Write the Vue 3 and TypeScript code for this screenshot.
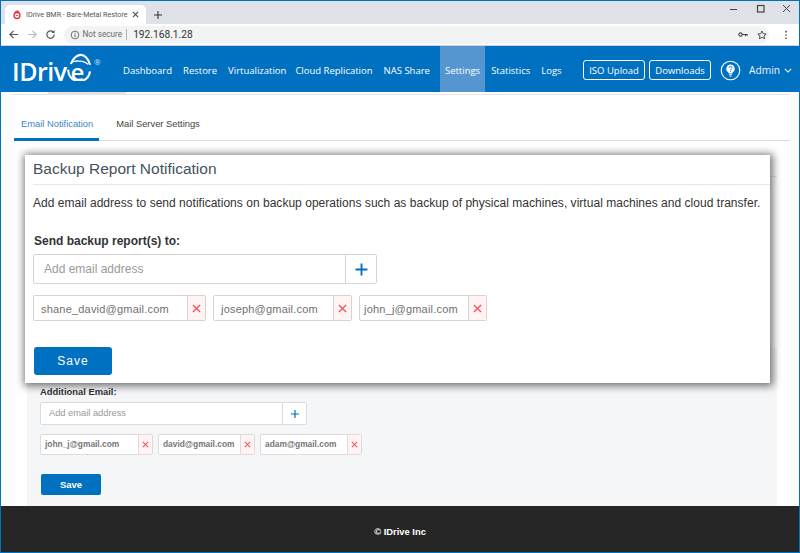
<script setup lang="ts">
type NavItem = { label: string; active?: boolean };

const navItems: NavItem[] = [
  { label: "Dashboard" },
  { label: "Restore" },
  { label: "Virtualization" },
  { label: "Cloud Replication" },
  { label: "NAS Share" },
  { label: "Settings", active: true },
  { label: "Statistics" },
  { label: "Logs" },
];

const modalEmails = ["shane_david@gmail.com", "joseph@gmail.com", "john_j@gmail.com"];
const pageEmails = ["john_j@gmail.com", "david@gmail.com", "adam@gmail.com"];
</script>

<template>
  <div class="window">
    <div class="tabstrip">
      <div class="tab">
        <svg class="favicon" viewBox="0 0 12 12" aria-hidden="true">
          <circle cx="6" cy="7.2" r="3.6" fill="none" stroke="#e8323c" stroke-width="1.6" />
          <path d="M3.6 4.4C4 1.4 8 1 8.6 3.8" fill="none" stroke="#e8323c" stroke-width="1.4" />
          <path d="M4.4 7.2h3.2" stroke="#e8323c" stroke-width="1" />
        </svg>
        <span class="tab-title">IDrive BMR - Bare-Metal Restore</span>
        <svg class="tab-close" viewBox="0 0 8 8" aria-hidden="true">
          <path d="M1 1l6 6M7 1L1 7" stroke="#444" stroke-width="1.2" />
        </svg>
      </div>
      <svg class="new-tab" viewBox="0 0 10 10" aria-hidden="true">
        <path d="M5 0v10M0 5h10" stroke="#333" stroke-width="1.3" />
      </svg>
      <div class="window-controls">
        <svg viewBox="0 0 10 10" aria-hidden="true"><path d="M0 5.5h7" stroke="#444" stroke-width="1" /></svg>
        <svg viewBox="0 0 10 10" aria-hidden="true"><rect x="1.5" y="1.5" width="6.5" height="6.5" fill="none" stroke="#444" stroke-width="1.2" /></svg>
        <svg viewBox="0 0 10 10" aria-hidden="true"><path d="M1 1l7 7M8 1L1 8" stroke="#444" stroke-width="1" /></svg>
      </div>
    </div>

    <div class="toolbar">
      <svg class="tool" viewBox="0 0 12 12" aria-hidden="true">
        <path d="M11 6H2M6 2L2 6l4 4" fill="none" stroke="#555" stroke-width="1.3" />
      </svg>
      <svg class="tool" viewBox="0 0 12 12" aria-hidden="true">
        <path d="M1 6h9M6 2l4 4-4 4" fill="none" stroke="#bbb" stroke-width="1.3" />
      </svg>
      <svg class="tool" viewBox="0 0 12 12" aria-hidden="true">
        <path d="M10 6a4 4 0 1 1-1.2-2.8" fill="none" stroke="#555" stroke-width="1.3" />
        <path d="M10.4 1v3.4H7z" fill="#555" />
      </svg>
      <div class="omnibox">
        <svg class="info" viewBox="0 0 12 12" aria-hidden="true">
          <circle cx="6" cy="6" r="4.6" fill="none" stroke="#555" stroke-width="1" />
          <path d="M6 5.4v3M6 3.4v1" stroke="#555" stroke-width="1.1" />
        </svg>
        <span class="not-secure">Not secure</span>
        <span class="url">192.168.1.28</span>
        <svg class="key" viewBox="0 0 12 8" aria-hidden="true">
          <circle cx="3" cy="4" r="2" fill="none" stroke="#444" stroke-width="1.3" />
          <path d="M5 4h6.5M9 4v2M11 4v1.6" stroke="#444" stroke-width="1.3" />
        </svg>
        <svg class="star" viewBox="0 0 12 12" aria-hidden="true">
          <path d="M6 1.2l1.5 3.2 3.5.4-2.6 2.3.7 3.4L6 8.8l-3.1 1.7.7-3.4L1 4.8l3.5-.4z" fill="none" stroke="#444" stroke-width="1.1" />
        </svg>
      </div>
      <svg class="menu" viewBox="0 0 4 12" aria-hidden="true">
        <circle cx="2" cy="2" r="1" fill="#444" />
        <circle cx="2" cy="6" r="1" fill="#444" />
        <circle cx="2" cy="10" r="1" fill="#444" />
      </svg>
    </div>

    <header class="nav">
      <div class="logo">
        <span class="logo-text">IDriv</span>
        <span class="logo-e">e</span>
        <svg class="logo-ring" viewBox="0 0 30 32" aria-hidden="true">
          <path d="M4.5 12.5C7 4.5 13 2 16 2c4 0 9 4 10.5 11.5" fill="none" stroke="#fff" stroke-width="2.4" />
          <path d="M1.5 19a12.5 12.5 0 0 0 25 2" fill="none" stroke="#fff" stroke-width="2.4" />
          <path d="M4.5 11C8 8.5 20 8 24 13" fill="none" stroke="#fff" stroke-width="1.6" />
        </svg>
        <span class="logo-reg">®</span>
      </div>
      <nav class="nav-items">
        <a v-for="item in navItems" :key="item.label" class="nav-item" :class="{ active: item.active }">{{ item.label }}</a>
      </nav>
      <div class="nav-right">
        <a class="outline-btn iso">ISO Upload</a>
        <a class="outline-btn dl">Downloads</a>
        <svg class="bulb" viewBox="0 0 22 22" aria-hidden="true">
          <circle cx="11" cy="11" r="9.7" fill="none" stroke="#fff" stroke-width="1.2" />
          <path d="M11 4.8a4.4 4.4 0 0 0-2.5 8c.5.4.6.9.6 1.4h3.8c0-.5.1-1 .6-1.4A4.4 4.4 0 0 0 11 4.8z" fill="#fff" />
          <path d="M9.5 8.2c.2-1.9 3.2-1.9 3.2 0 0 1.2-1.6 1.2-1.6 2.7M11.1 11.6v1" fill="none" stroke="#0070c0" stroke-width="0.9" />
          <path d="M9.4 15.4h3.2M10 17h2" stroke="#fff" stroke-width="1" />
        </svg>
        <span class="admin">Admin</span>
        <svg class="chev" viewBox="0 0 10 6" aria-hidden="true">
          <path d="M1 1l4 4 4-4" fill="none" stroke="#fff" stroke-width="1.3" />
        </svg>
      </div>
    </header>

    <main class="content">
      <div class="sheet">
        <div class="top-strip"><span class="top-tab"></span></div>
        <div class="tabs">
          <a class="tab-link selected">Email Notification</a>
          <a class="tab-link">Mail Server Settings</a>
        </div>
        <section class="panel">
          <label class="page-label">Additional Email:</label>
          <div class="page-input">
            <span class="page-placeholder">Add email address</span>
            <span class="page-add">
              <svg viewBox="0 0 10 10" aria-hidden="true"><path d="M5 1v8M1 5h8" stroke="#0070c0" stroke-width="1.2" /></svg>
            </span>
          </div>
          <div class="page-chips">
            <div v-for="email in pageEmails" :key="email" class="page-chip">
              <span class="page-chip-text">{{ email }}</span>
              <span class="page-chip-x">
                <svg viewBox="0 0 8 8" aria-hidden="true"><path d="M1 1l6 6M7 1L1 7" stroke="#f4555f" stroke-width="1.2" /></svg>
              </span>
            </div>
          </div>
          <button class="page-save">Save</button>
        </section>
      </div>
    </main>

    <footer class="footer">© IDrive Inc</footer>

    <div class="modal">
      <h2 class="modal-title">Backup Report Notification</h2>
      <div class="modal-body">
        <p class="modal-desc">Add email address to send notifications on backup operations such as backup of physical machines, virtual machines and cloud transfer.</p>
        <label class="modal-label">Send backup report(s) to:</label>
        <div class="modal-input">
          <span class="modal-placeholder">Add email address</span>
          <span class="modal-add">
            <svg viewBox="0 0 12 12" aria-hidden="true"><path d="M6 0.5v11M0.5 6h11" stroke="#0070c0" stroke-width="1.7" /></svg>
          </span>
        </div>
        <div class="modal-chips">
          <div v-for="email in modalEmails" :key="email" class="modal-chip">
            <span class="modal-chip-text">{{ email }}</span>
            <span class="modal-chip-x">
              <svg viewBox="0 0 10 10" aria-hidden="true"><path d="M1 1l8 8M9 1L1 9" stroke="#f4555f" stroke-width="1.5" /></svg>
            </span>
          </div>
        </div>
        <button class="modal-save">Save</button>
      </div>
    </div>
  </div>
</template>

<style>
html,
body {
  margin: 0;
  background: #fff;
}
</style>

<style scoped>
.window {
  position: relative;
  box-sizing: border-box;
  width: 800px;
  height: 553px;
  overflow: hidden;
  display: flex;
  flex-direction: column;
  border: 1px solid #0072c2;
  font-family: "Liberation Sans", Arial, sans-serif;
  background: #fff;
}

.tabstrip {
  display: flex;
  align-items: center;
  height: 23px;
  background: #dee1e6;
  flex: none;
}

.tab {
  display: flex;
  align-items: center;
  box-sizing: border-box;
  width: 141px;
  height: 19px;
  margin: 4px 0 0 4px;
  padding: 0 7px;
  background: #fff;
  border-radius: 5px 5px 0 0;
}

.favicon {
  width: 10px;
  height: 11px;
  flex: none;
}

.tab-title {
  margin-left: 4px;
  font-family: Roboto, sans-serif;
  font-size: 7.2px;
  color: #555;
  white-space: nowrap;
}

.tab-close {
  width: 7px;
  height: 7px;
  margin-left: auto;
  flex: none;
}

.new-tab {
  width: 8px;
  height: 8px;
  margin: 4px 0 0 8px;
}

.window-controls {
  display: flex;
  align-items: center;
  gap: 16px;
  margin-left: auto;
  margin-right: 7px;
  margin-top: -8px;
}

.window-controls svg {
  width: 10px;
  height: 10px;
}

.toolbar {
  display: flex;
  align-items: center;
  height: 21px;
  padding-left: 7px;
  background: #fff;
  border-bottom: 1px solid #cfd2d6;
  flex: none;
}

.tool {
  width: 11px;
  height: 11px;
  margin-right: 7.5px;
}

.omnibox {
  display: flex;
  align-items: center;
  flex: 1;
  height: 18px;
  margin-left: 0;
  padding: 0 2px 0 6px;
  background: #f1f3f4;
  border-radius: 9px;
}

.info {
  width: 10px;
  height: 10px;
  flex: none;
}

.not-secure {
  margin-left: 3px;
  padding-right: 4px;
  border-right: 1px solid #b5b5b5;
  font-family: Roboto, sans-serif;
  font-size: 8.2px;
  line-height: 11px;
  color: #6b6b6b;
}

.url {
  margin-left: 6px;
  font-family: Roboto, sans-serif;
  font-size: 10.2px;
  color: #333;
}

.key {
  width: 10px;
  height: 7px;
  margin-left: auto;
}

.star {
  width: 10px;
  height: 10px;
  margin-left: 9px;
}

.menu {
  width: 4px;
  height: 10px;
  margin: 0 11px 0 15px;
}

.nav {
  display: flex;
  align-items: stretch;
  height: 46px;
  background: #0070c0;
  flex: none;
}

.logo {
  position: relative;
  display: flex;
  align-items: center;
  width: 116px;
  padding-left: 11px;
  box-sizing: border-box;
  color: #fff;
  font-family: "Open Sans", sans-serif;
}

.logo-text {
  font-size: 25px;
  font-weight: 600;
  letter-spacing: -0.5px;
  margin-top: 4px;
}

.logo-e {
  font-size: 24px;
  font-weight: 600;
  margin: 4px 0 0 4px;
}

.logo-ring {
  position: absolute;
  left: 66px;
  top: 7px;
  width: 26px;
  height: 28px;
}

.logo-reg {
  position: absolute;
  left: 93px;
  top: 10px;
  font-size: 8px;
  color: #cfe3f3;
}

.nav-items {
  display: flex;
  align-items: stretch;
  margin-left: 0.5px;
}

.nav-item {
  display: flex;
  align-items: center;
  padding: 2px 5.5px 0;
  font-family: "Open Sans", sans-serif;
  font-size: 9.5px;
  color: #fff;
  white-space: nowrap;
}

.nav-item:nth-child(3) {
  margin-right: -2px;
}

.nav-item:nth-child(5) {
  margin-right: 4.5px;
}

.nav-item.active {
  padding: 2px 5px 0;
  margin-right: 0.5px;
  background: #5596d0;
}

.nav-right {
  display: flex;
  align-items: center;
  margin-left: auto;
  padding-right: 7px;
}

.outline-btn {
  display: flex;
  align-items: center;
  justify-content: center;
  box-sizing: border-box;
  height: 20px;
  margin-top: 2px;
  border: 1px solid #fff;
  border-radius: 3px;
  font-family: "Open Sans", sans-serif;
  font-size: 9.5px;
  color: #fff;
}

.iso {
  width: 62px;
}

.dl {
  width: 62px;
  margin-left: 4px;
}

.bulb {
  width: 21px;
  height: 21px;
  margin: 2px 0 0 9px;
}

.admin {
  margin: 2px 0 0 8px;
  font-family: "Open Sans", sans-serif;
  font-size: 10.2px;
  color: #eef5fb;
}

.chev {
  width: 8px;
  height: 5px;
  margin: 3px 0 0 4px;
}

.content {
  flex: 1;
  display: flex;
  background: #fcfcfc;
  padding-left: 11px;
  padding-right: 9px;
}

.sheet {
  flex: 1;
  display: flex;
  flex-direction: column;
  background: #fff;
}

.top-strip {
  height: 2px;
  padding-left: 36px;
  border-bottom: 1px solid #e4e4e4;
  flex: none;
}

.top-tab {
  display: block;
  width: 78px;
  height: 3px;
  background: #e4e4e4;
}

.tabs {
  display: flex;
  height: 46px;
  box-sizing: border-box;
  flex: none;
  margin-left: 2px;
  padding-top: 22px;
  border-bottom: 1px solid #dcdcdc;
  font-size: 9.35px;
}

.tab-link {
  position: relative;
  padding: 2px 6px 0 7px;
  color: #444;
  margin-right: 10px;
}

.tab-link.selected {
  color: #3b86c6;
}

.tab-link.selected::after {
  content: "";
  position: absolute;
  left: 0;
  right: 0;
  bottom: -1px;
  height: 3px;
  background: #0070c0;
}

.panel {
  flex: 1;
  box-sizing: border-box;
  margin: 35px 13px 0 15px;
  padding: 209px 0 0 13px;
  background: linear-gradient(#fff 171px, #f5f6f8 171px);
  border-top: 1px solid #e8e8e8;
}

.page-label {
  display: block;
  font-size: 9.4px;
  font-weight: 700;
  color: #333;
}

.page-input {
  display: flex;
  width: 267px;
  height: 23px;
  margin-top: 5px;
  box-sizing: border-box;
  background: #fff;
  border: 1px solid #dcdcdc;
  border-radius: 2px;
}

.page-placeholder {
  flex: 1;
  padding-left: 8px;
  font-size: 9.3px;
  line-height: 21px;
  color: #999;
}

.page-add {
  display: flex;
  align-items: center;
  justify-content: center;
  width: 23px;
  border-left: 1px solid #dcdcdc;
}

.page-add svg {
  width: 10px;
  height: 10px;
}

.page-chips {
  display: flex;
  gap: 5px;
  margin-top: 9px;
}

.page-chip {
  display: flex;
  height: 21px;
  box-sizing: border-box;
  background: #fff;
  border: 1px solid #dcdcdc;
  border-radius: 2px;
}

.page-chip:nth-child(1) {
  width: 113px;
}

.page-chip:nth-child(2) {
  width: 97px;
}

.page-chip:nth-child(3) {
  width: 102px;
}

.page-chip-text {
  flex: 1;
  padding-left: 4px;
  font-size: 8.4px;
  font-weight: 700;
  line-height: 19px;
  color: #777;
}

.page-chip-x {
  display: flex;
  align-items: center;
  justify-content: center;
  width: 13px;
  background: #fff3f3;
  border-left: 1px solid #dcdcdc;
}

.page-chip-x svg {
  width: 7px;
  height: 7px;
}

.page-save {
  display: block;
  width: 60px;
  height: 21px;
  margin-top: 19px;
  margin-left: 1px;
  padding: 0;
  background: #0070c0;
  border: none;
  border-radius: 2px;
  font-family: inherit;
  font-size: 9.5px;
  font-weight: 700;
  color: #fff;
}

.footer {
  height: 46px;
  flex: none;
  text-align: center;
  font-size: 9.4px;
  font-weight: 700;
  line-height: 52px;
  color: #fff;
  background: #262626;
}

.modal {
  position: absolute;
  left: 24px;
  top: 154px;
  width: 745px;
  height: 228px;
  background: #fff;
  box-shadow: 1px 1px 8px 2px rgba(0, 0, 0, 0.55);
}

.modal-title {
  margin: 0 0 0 8px;
  height: 29px;
  font-size: 15.5px;
  font-weight: 400;
  line-height: 28px;
  color: #46525c;
  border-bottom: 1px solid #e6e6e6;
}

.modal-body {
  padding: 11px 8px 0;
}

.modal-desc {
  margin: 0;
  font-size: 12px;
  letter-spacing: 0.027px;
  line-height: 15px;
  color: #333;
  white-space: nowrap;
}

.modal-label {
  display: block;
  margin-top: 23px;
  margin-left: 1px;
  font-size: 12px;
  font-weight: 700;
  line-height: 15px;
  color: #333;
}

.modal-input {
  display: flex;
  width: 344px;
  height: 30px;
  margin-top: 5px;
  box-sizing: border-box;
  border: 1px solid #d4d4d4;
  border-radius: 2px;
}

.modal-placeholder {
  flex: 1;
  padding-left: 10px;
  font-size: 12px;
  line-height: 28px;
  color: #999;
}

.modal-add {
  display: flex;
  align-items: center;
  justify-content: center;
  width: 30px;
  border-left: 1px solid #d4d4d4;
}

.modal-add svg {
  width: 13px;
  height: 13px;
}

.modal-chips {
  display: flex;
  gap: 7px;
  margin-top: 11px;
}

.modal-chip {
  display: flex;
  height: 26px;
  box-sizing: border-box;
  border: 1px solid #d4d4d4;
  border-radius: 2px;
}

.modal-chip:nth-child(1) {
  width: 173px;
}

.modal-chip:nth-child(2) {
  width: 139px;
}

.modal-chip:nth-child(3) {
  width: 128px;
}

.modal-chip-text {
  flex: 1;
  padding-left: 7px;
  font-size: 11px;
  letter-spacing: 0.2px;
  line-height: 26px;
  color: #707070;
}

.modal-chip:nth-child(3) .modal-chip-text {
  padding-left: 4px;
}

.modal-chip-x {
  display: flex;
  align-items: center;
  justify-content: center;
  width: 17px;
  background: #fff3f3;
  border-left: 1px solid #d4d4d4;
}

.modal-chip-x svg {
  width: 9px;
  height: 9px;
}

.modal-save {
  display: block;
  width: 78px;
  height: 28px;
  margin-top: 26px;
  margin-left: 1px;
  padding: 0;
  background: #0070c0;
  border: none;
  border-radius: 3px;
  font-family: inherit;
  font-size: 12px;
  letter-spacing: 1px;
  color: #fff;
}
</style>
